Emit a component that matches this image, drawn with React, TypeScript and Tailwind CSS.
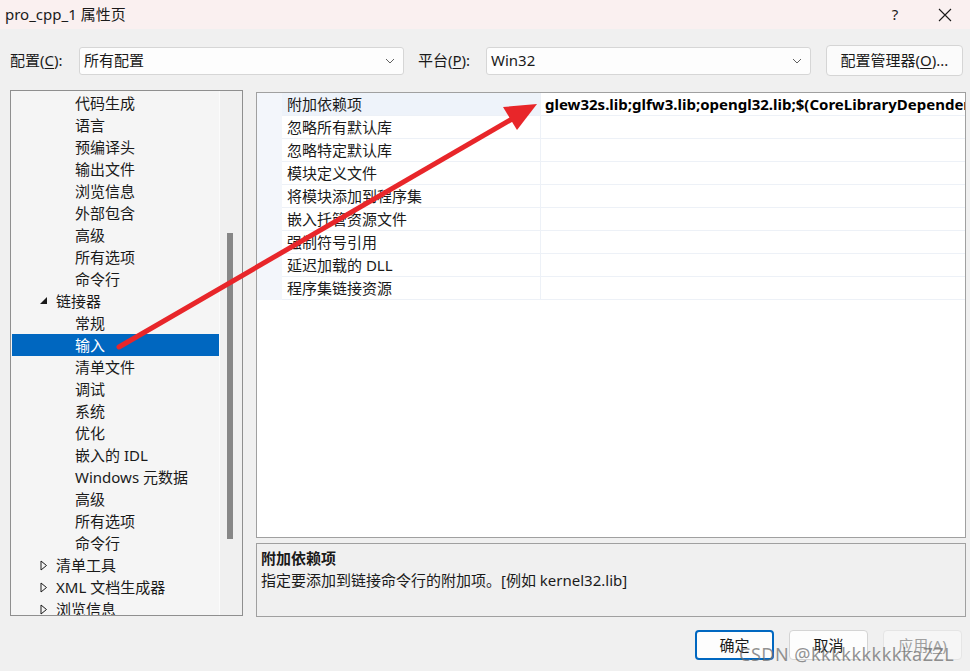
import React from 'react'

const FONT = '"Noto Sans", "Noto Sans CJK SC", sans-serif'

type TreeItem = { label: string; level: 1 | 2; state?: 'open' | 'closed'; selected?: boolean }

const treeItems: TreeItem[] = [
  { label: '代码生成', level: 2 },
  { label: '语言', level: 2 },
  { label: '预编译头', level: 2 },
  { label: '输出文件', level: 2 },
  { label: '浏览信息', level: 2 },
  { label: '外部包含', level: 2 },
  { label: '高级', level: 2 },
  { label: '所有选项', level: 2 },
  { label: '命令行', level: 2 },
  { label: '链接器', level: 1, state: 'open' },
  { label: '常规', level: 2 },
  { label: '输入', level: 2, selected: true },
  { label: '清单文件', level: 2 },
  { label: '调试', level: 2 },
  { label: '系统', level: 2 },
  { label: '优化', level: 2 },
  { label: '嵌入的 IDL', level: 2 },
  { label: 'Windows 元数据', level: 2 },
  { label: '高级', level: 2 },
  { label: '所有选项', level: 2 },
  { label: '命令行', level: 2 },
  { label: '清单工具', level: 1, state: 'closed' },
  { label: 'XML 文档生成器', level: 1, state: 'closed' },
  { label: '浏览信息', level: 1, state: 'closed' },
]

const props = [
  '附加依赖项',
  '忽略所有默认库',
  '忽略特定默认库',
  '模块定义文件',
  '将模块添加到程序集',
  '嵌入托管资源文件',
  '强制符号引用',
  '延迟加载的 DLL',
  '程序集链接资源',
]

function Chevron() {
  return (
    <svg width="10" height="6" viewBox="0 0 10 6" className="shrink-0">
      <path d="M1 1 L5 5 L9 1" fill="none" stroke="#606060" strokeWidth="1" />
    </svg>
  )
}

function Dropdown({ value }: { value: string }) {
  return (
    <div className="w-[325px] h-[28px] bg-[#fdfdfd] border border-[#d6d6d6] rounded-[3px] flex items-center justify-between pl-[4px] pr-[8px]">
      <span>{value}</span>
      <Chevron />
    </div>
  )
}

function TreeRow({ item }: { item: TreeItem }) {
  return (
    <div
      className={`h-[22px] flex items-center shrink-0 ${item.selected ? 'bg-[#0067c0] text-white' : 'text-[#1a1a1a]'}`}
    >
      {item.level === 1 ? (
        <div className="flex items-center pl-[28px]">
          <div className="w-[16px] flex items-center">
            {item.state === 'open' ? (
              <svg width="8" height="8" viewBox="0 0 8 8">
                <path d="M7 0 L7 7 L0 7 Z" fill="#1a1a1a" />
              </svg>
            ) : (
              <svg width="8" height="11" viewBox="0 0 8 11">
                <path d="M1 1 L6.5 5.5 L1 10 Z" fill="none" stroke="#1a1a1a" strokeWidth="1" />
              </svg>
            )}
          </div>
          <span>{item.label}</span>
        </div>
      ) : (
        <span className="pl-[63px]">{item.label}</span>
      )}
    </div>
  )
}

function Btn({ children, primary, disabled }: { children: React.ReactNode; primary?: boolean; disabled?: boolean }) {
  const cls = primary
    ? 'border-2 border-[#0067c0] bg-[#fdfdfd] text-[#1a1a1a]'
    : disabled
      ? 'border border-[#e5e5e5] bg-[#f6f6f6] text-[#a0a0a0]'
      : 'border border-[#d4d4d4] bg-[#fdfdfd] text-[#1a1a1a]'
  return (
    <div className={`w-[79px] h-[30px] rounded-[4px] flex items-center justify-center ${cls}`}>{children}</div>
  )
}

export default function App() {
  return (
    <div
      className="relative w-[970px] h-[671px] bg-[#f0f0f0] text-[15px] text-[#1a1a1a] overflow-hidden flex flex-col"
      style={{ fontFamily: FONT }}
    >
      {/* title bar */}
      <div className="h-[29px] bg-[#faf0f0] flex items-center justify-between pl-[5px] shrink-0">
        <span className="text-[15px]">pro_cpp_1 属性页</span>
        <div className="flex items-center">
          <span className="w-[60px] text-center text-[15px] pl-[10px]">?</span>
          <div className="w-[50px] flex justify-center">
            <svg width="14" height="14" viewBox="0 0 14 14">
              <path d="M1 1 L13 13 M13 1 L1 13" stroke="#1a1a1a" strokeWidth="1.1" />
            </svg>
          </div>
        </div>
      </div>

      {/* config row */}
      <div className="mt-[16px] h-[31px] flex items-center pl-[10px] shrink-0">
        <span className="w-[69px]">
          配置(<span className="underline underline-offset-2">C</span>):
        </span>
        <Dropdown value="所有配置" />
        <span className="ml-[14px] w-[68px]">
          平台(<span className="underline underline-offset-2">P</span>):
        </span>
        <Dropdown value="Win32" />
        <div className="ml-[15px] w-[137px] h-[31px] bg-[#fbfbfb] border border-[#d5d5d5] rounded-[4px] flex items-center justify-center">
          配置管理器(<span className="underline underline-offset-2">O</span>)...
        </div>
      </div>

      {/* main area */}
      <div className="mt-[14px] flex pl-[10px] shrink-0">
        <div className="w-[233px] h-[526px] border border-[#8f8f8f] bg-[#f5f5f5] flex overflow-hidden">
          <div className="w-[208px] pt-[1px] pl-[1px] flex flex-col">
            {treeItems.map((item, i) => (
              <TreeRow key={i} item={item} />
            ))}
          </div>
          <div className="flex-1 border-l border-[#fbfbfb] bg-[#f0f0f0] pt-[142px] pl-[7px]">
            <div className="w-[6px] h-[306px] bg-[#878787]" />
          </div>
        </div>

        <div className="ml-[13px] w-[710px] flex flex-col">
          <div className="h-[446px] mt-[2px] border border-[#a0a0a0] bg-white flex flex-col overflow-hidden">
            <div className="flex">
              <div className="w-[25px] shrink-0 bg-[#f3f6fb]" />
              <div className="flex-1 min-w-0 flex flex-col">
                {props.map((p, i) => (
                  <div key={i} className="h-[23px] flex border-b border-[#edf1f7]">
                    <div className={`w-[258px] shrink-0 flex items-center pl-[5px] ${i === 0 ? 'bg-[#eef3fa]' : ''}`}>{p}</div>
                    <div className="flex-1 min-w-0 border-l border-[#edf1f7] flex items-center pl-[4px] overflow-hidden whitespace-nowrap">
                      {i === 0 && (
                        <span className="font-bold text-[15px] text-black">
                          glew32s.lib;glfw3.lib;opengl32.lib;$(CoreLibraryDependencies);%(AdditionalDependencies)
                        </span>
                      )}
                    </div>
                  </div>
                ))}
              </div>
            </div>
          </div>

          <div className="mt-[5px] h-[74px] border border-[#a0a0a0] bg-[#f0f0f0] px-[4px] pt-[3px] flex flex-col">
            <span className="font-bold leading-[22px]">附加依赖项</span>
            <span className="leading-[22px]">指定要添加到链接命令行的附加项。[例如 kernel32.lib]</span>
          </div>
        </div>
      </div>

      {/* bottom buttons */}
      <div className="mt-[13px] flex justify-end gap-[15px] pr-[8px]">
        <Btn primary>确定</Btn>
        <Btn>取消</Btn>
        <Btn disabled>
          应用(<span className="underline underline-offset-2">A</span>)
        </Btn>
      </div>

      {/* watermark */}
      <div className="absolute left-[739px] top-[641px] text-[18px] text-[rgba(110,110,110,0.75)] tracking-[0.5px] pointer-events-none">
        CSDN @kkkkkkkkkkaZZL
      </div>

      {/* red annotation arrow */}
      <svg className="absolute left-0 top-0 pointer-events-none" width="970" height="671" viewBox="0 0 970 671">
        <line x1="119" y1="347" x2="512" y2="119" stroke="#e8262a" strokeWidth="5" strokeLinecap="round" />
        <polygon points="537,104 517,130 503,107" fill="#e8262a" />
      </svg>
    </div>
  )
}
